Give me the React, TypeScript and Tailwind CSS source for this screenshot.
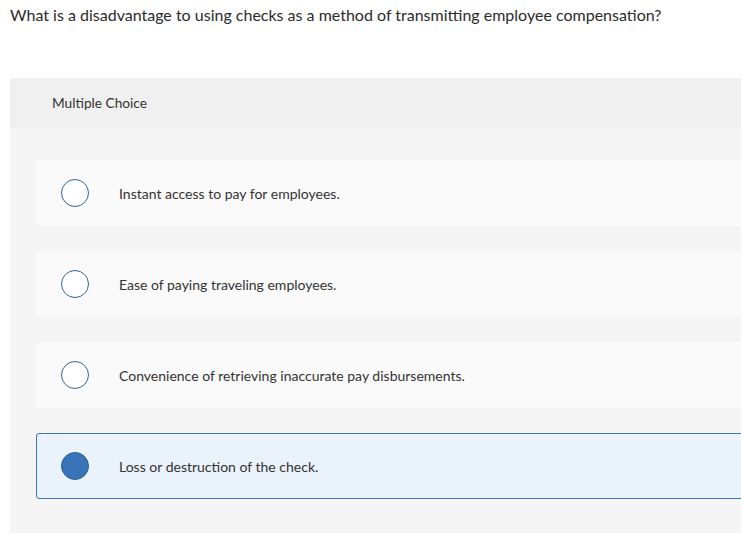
import React from "react";

const options = [
  { text: "Instant access to pay for employees.", selected: false },
  { text: "Ease of paying traveling employees.", selected: false },
  { text: "Convenience of retrieving inaccurate pay disbursements.", selected: false },
  { text: "Loss or destruction of the check.", selected: true },
];

export default function App() {
  return (
    <div className="w-[741px] h-[533px] overflow-hidden bg-white text-[#2d2d2d]" style={{ fontFamily: "Lato, 'Open Sans', sans-serif" }}>
      <p className="pl-[10px] pt-[5px] text-[16px] leading-[20px] text-[#2b2b2b]">
        What is a disadvantage to using checks as a method of transmitting employee compensation?
      </p>
      <div className="ml-[10px] mt-[53px] w-[760px] bg-[#f5f5f5] pb-[40px]">
        <div className="h-[50px] bg-[#f0f0f0] pl-[42px] flex items-center text-[13.7px] text-[#333]">
          <span>Multiple Choice</span>
        </div>
        <div className="pt-[32px] pl-[26px] flex flex-col gap-[25px]">
          {options.map((o, i) => (
            <div
              key={i}
              className={
                o.selected
                  ? "h-[66px] flex items-center rounded-[3px] border border-[#3b76bb] bg-[#eaf2fb] pl-[24px]"
                  : "h-[66px] flex items-center rounded-[3px] border border-transparent bg-[#fafafa] pl-[24px]"
              }
            >
              {o.selected ? (
                <span className="w-[28px] h-[28px] rounded-full bg-[#3a74b8] border border-[#2d5f99]" />
              ) : (
                <span className="w-[28px] h-[28px] rounded-full bg-white border-[1.5px] border-[#33639a]" />
              )}
              <span className="ml-[30px] text-[14px] text-[#333]">{o.text}</span>
            </div>
          ))}
        </div>
      </div>
    </div>
  );
}
